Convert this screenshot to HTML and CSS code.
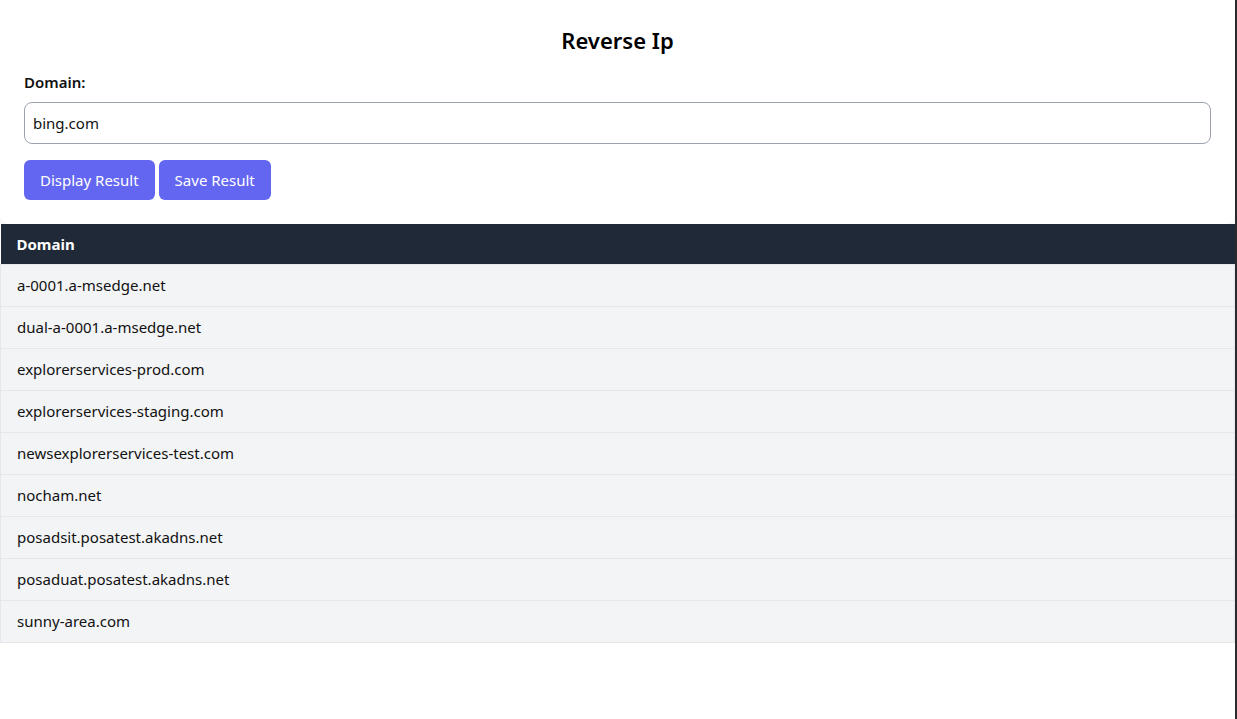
FILE: index.html
```html
<!DOCTYPE html>
<html lang="en">
<head>
<meta charset="utf-8">
<title>Reverse Ip</title>
<link rel="stylesheet" href="styles.css">
</head>
<body>
<div class="page">
  <section class="card">
    <h1 class="title">Reverse Ip</h1>
    <label class="label" for="domain">Domain:</label>
    <input class="input" id="domain" type="text" value="bing.com">
    <div class="actions">
      <button class="btn">Display Result</button>
      <button class="btn">Save Result</button>
    </div>
  </section>
  <table class="results">
    <thead>
      <tr><th>Domain</th></tr>
    </thead>
    <tbody>
      <tr><td>a-0001.a-msedge.net</td></tr>
      <tr><td>dual-a-0001.a-msedge.net</td></tr>
      <tr><td>explorerservices-prod.com</td></tr>
      <tr><td>explorerservices-staging.com</td></tr>
      <tr><td>newsexplorerservices-test.com</td></tr>
      <tr><td>nocham.net</td></tr>
      <tr><td>posadsit.posatest.akadns.net</td></tr>
      <tr><td>posaduat.posatest.akadns.net</td></tr>
      <tr><td>sunny-area.com</td></tr>
    </tbody>
  </table>
</div>
</body>
</html>
```

FILE: styles.css
```css
* { box-sizing: border-box; }
html, body { margin: 0; padding: 0; background: #ffffff; }
body {
  font-family: "Noto Sans", "Open Sans", sans-serif;
  color: #111111;
}
.page {
  min-height: 100vh;
  border-right: 2px solid #2a2c30;
}
.card {
  background: #ffffff;
  border-radius: 0 0 8px 8px;
  padding: 24px 24px 24px 24px;
  box-shadow: 0 1px 3px rgba(0,0,0,0.08);
  display: flex;
  flex-direction: column;
}
.title {
  margin: 0 0 16px 0;
  font-size: 22px;
  line-height: 32px;
  font-weight: 600;
  text-align: center;
  color: #000;
}
.label {
  font-size: 15px;
  line-height: 20px;
  font-weight: 600;
  margin-bottom: 10px;
}
.input {
  height: 42px;
  width: 100%;
  border: 1px solid #9ca3af;
  border-radius: 8px;
  padding: 0 8px;
  font-family: inherit;
  font-size: 15px;
  color: #111;
  background: #fff;
}
.actions {
  display: flex;
  gap: 4px;
  margin-top: 16px;
}
.btn {
  height: 40px;
  padding: 0 16px;
  border: none;
  border-radius: 6px;
  background: #6366f1;
  color: #ffffff;
  font-family: inherit;
  font-size: 15px;
}
.results {
  width: 100%;
  border-collapse: collapse;
}
.results th {
  background: #1f2937;
  color: #ffffff;
  text-align: left;
  font-size: 15px;
  font-weight: 700;
  height: 40px;
  padding: 0 16px;
}
.results td {
  background: #f3f4f6;
  border: 1px solid #e5e7eb;
  padding: 10px 16px;
  font-size: 15px;
  line-height: 21px;
}
```
